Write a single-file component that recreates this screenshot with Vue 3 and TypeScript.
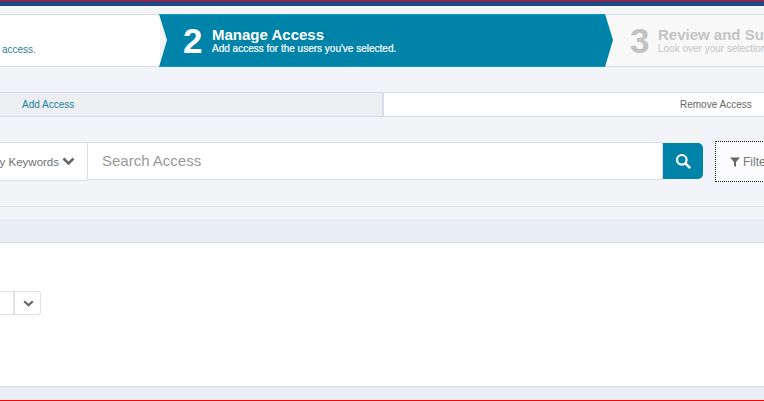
<script setup lang="ts">
const tabs = [
  { label: 'Add Access', cls: 'tab-add' },
  { label: 'Remove Access', cls: 'tab-remove' },
]
</script>

<template>
  <div class="page">
    <div class="topbar"></div>

    <div class="steps">
      <div class="step step-one"><span class="sub">access.</span></div>
      <div class="step step-two">
        <svg class="arrow" width="455" height="54" viewBox="0 0 455 54" aria-hidden="true">
          <polygon points="0,0 446,0 454,26 446,53 0,53 8,26" fill="#0083a9" />
          <path d="M0 .5H446M0 52.5H446" stroke="#00a0c6" stroke-width="1" />
        </svg>
        <span class="num">2</span>
        <div class="step-text">
          <strong>Manage Access</strong>
          <span>Add access for the users you've selected.</span>
        </div>
      </div>
      <div class="step step-three">
        <span class="num">3</span>
        <div class="step-text">
          <strong>Review and Submit</strong>
          <span>Look over your selections</span>
        </div>
      </div>
    </div>

    <div class="tabs">
      <div v-for="t in tabs" :key="t.label" class="tab" :class="t.cls">{{ t.label }}</div>
    </div>

    <div class="search-row">
      <div class="by-keywords">
        <span class="kw">By Keywords</span>
        <svg class="kw-icon" width="13" height="9" viewBox="0 0 13 9"><path d="M1.5 1.5 6.5 6.5 11.5 1.5" fill="none" stroke="#666" stroke-width="2.6" /></svg>
      </div>
      <div class="search-input">Search Access</div>
      <button class="search-btn" type="button" aria-label="Search">
        <svg width="16" height="16" viewBox="0 0 16 16"><circle cx="6.8" cy="6.8" r="4.8" fill="none" stroke="#fff" stroke-width="2.2" /><path d="M10.4 10.4 14.4 14.4" stroke="#fff" stroke-width="2.6" stroke-linecap="round" /></svg>
      </button>
      <div class="filter">
        <svg width="10" height="10" viewBox="0 0 10 10"><path d="M0 .5H10L6 5V10L4 8.8V5Z" fill="#666" /></svg>
        <span>Filters</span>
      </div>
    </div>

    <div class="rule-band"></div>
    <div class="table-head"></div>

    <div class="table-body">
      <div class="pager">
        <div class="pager-input"></div>
        <div class="pager-caret">
          <svg width="11" height="7" viewBox="0 0 11 7"><path d="M1.2 1.2 5.5 5.2 9.8 1.2" fill="none" stroke="#666" stroke-width="2.2" /></svg>
        </div>
      </div>
    </div>

    <div class="table-foot"></div>
  </div>
</template>

<style scoped>
.page {
  width: 764px;
  height: 401px;
  overflow: hidden;
  background: #f2f4f8;
  font-family: "Liberation Sans", Arial, sans-serif;
  position: relative;
}
.topbar {
  height: 6px;
  background: #1f4a8a;
  border-top: 1px solid #e2061c;
  box-sizing: border-box;
}
.steps {
  display: flex;
  margin-top: 8px;
  height: 53px;
  width: 900px;
}
.step { position: relative; box-sizing: border-box; height: 53px; }
.step-one {
  width: 160px;
  background: #fff;
  border-top: 1px solid #dcdfe8;
  border-bottom: 1px solid #d8dce8;
  flex: none;
}
.step-one .sub {
  position: absolute;
  left: 2px;
  top: 29px;
  font-size: 10px;
  color: #2b7f9b;
}
.step-two {
  width: 455px;
  flex: none;
  margin-left: -1px;
  color: #fff;
  display: flex;
  align-items: center;
  padding-left: 24px;
  z-index: 2;
}
.arrow { position: absolute; left: 0; top: 0; }
.num {
  position: relative;
  font-size: 35px;
  font-weight: 700;
  line-height: 53px;
  width: 29px;
}
.step-text {
  position: relative;
  display: flex;
  flex-direction: column;
  margin-top: 0;
}
.step-text strong { font-size: 15px; line-height: 16px; }
.step-text span { font-size: 10px; line-height: 11px; font-weight: 400; }
.step-two .step-text span { -webkit-text-stroke: 0.2px #fff; }
.step-three {
  flex: 1;
  margin-left: -11px;
  padding-left: 27px;
  display: flex;
  align-items: center;
  color: #c4c4c4;
  background: #f8f8f9;
  border-top: 1px solid #dcdfe8;
  border-bottom: 1px solid #d8dce8;
  z-index: 1;
}
.step-three .num { color: #c2c2c2; width: 28px; }
.tabs {
  display: flex;
  margin-top: 25px;
  height: 25px;
}
.tab {
  box-sizing: border-box;
  height: 25px;
  font-size: 10px;
  line-height: 23px;
  border-top: 1px solid #d8dbe3;
  border-bottom: 1px solid #d8dbe3;
}
.tab-add {
  width: 382px;
  flex: none;
  background: #eceef2;
  color: #1d7f9f;
  padding-left: 22px;
}
.tab-remove {
  flex: 1;
  background: #fff;
  color: #666;
  border-left: 2px solid #d8dce6;
  padding-left: 296px;
}
.search-row {
  display: flex;
  align-items: flex-start;
  margin-top: 25px;
  height: 39px;
}
.by-keywords {
  box-sizing: border-box;
  width: 88px;
  height: 39px;
  flex: none;
  background: #fff;
  border: 1px solid #dcdfe8;
  border-left: 0;
  display: flex;
  align-items: center;
  justify-content: flex-end;
  gap: 3px;
  padding-right: 12px;
  font-size: 11.5px;
  color: #707070;
  overflow: hidden;
  white-space: nowrap;
}
.kw, .kw-icon { flex: none; }
.search-input {
  box-sizing: border-box;
  width: 575px;
  height: 38px;
  flex: none;
  background: #fff;
  border-top: 1px solid #dcdfe8;
  border-bottom: 1px solid #d8dce6;
  border-right: 1px solid #d8dce6;
  padding-left: 14px;
  font-size: 15px;
  line-height: 36px;
  color: #999;
}
.search-btn {
  width: 40px;
  height: 36px;
  flex: none;
  margin: 1px 0 0;
  padding: 0;
  border: 0;
  background: #0083a9;
  border-radius: 0 5px 5px 0;
  display: flex;
  align-items: center;
  justify-content: center;
}
.filter {
  box-sizing: border-box;
  width: 80px;
  height: 41px;
  flex: none;
  margin: -1px 0 0 12px;
  background: #fcfcff;
  border: 1px dotted #10204a;
  display: flex;
  align-items: center;
  gap: 3px;
  padding-left: 14px;
  font-size: 12px;
  color: #777;
  white-space: nowrap;
}
.rule-band {
  height: 12px;
  margin-top: 14px;
  border-bottom: 1px solid #dfe1e8;
  box-sizing: border-box;
  background: #f2f4f8;
}
.table-head {
  box-sizing: border-box;
  height: 36px;
  background: linear-gradient(#f2f4f8 12px, #e9edf5 12px);
  border-bottom: 1px solid #d6d9e4;
}
.table-body {
  height: 143px;
  background: #fff;
  padding-top: 48px;
  box-sizing: border-box;
}
.pager { display: flex; height: 24px; width: 41px; }
.pager-input {
  box-sizing: border-box;
  width: 15px;
  border: 1px solid #e0e2e8;
  border-left: 0;
  border-right-width: 2px;
}
.pager-caret {
  box-sizing: border-box;
  width: 26px;
  border: 1px solid #e0e2e8;
  border-left: 0;
  border-radius: 0 3px 3px 0;
  display: flex;
  align-items: center;
  justify-content: center;
  padding-left: 2px;
}
.table-foot {
  box-sizing: border-box;
  height: 15px;
  background: #e9edf5;
  border-top: 1px solid #d6d9e4;
  border-bottom: 1px solid #ff0000;
}
</style>
